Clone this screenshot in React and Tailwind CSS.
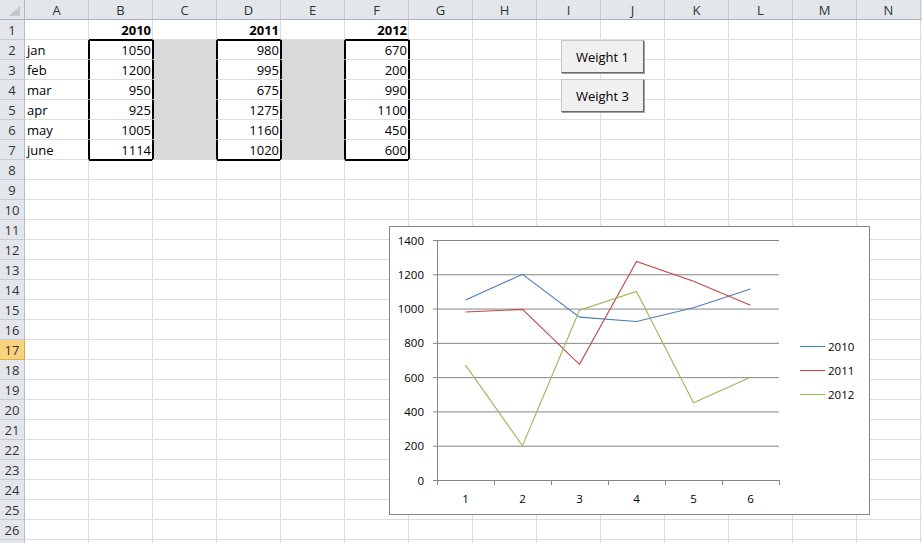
import React from "react";

const COLS = ["A","B","C","D","E","F","G","H","I","J","K","L","M","N","O"];
const MONTHS = ["jan","feb","mar","apr","may","june"];
const S2010 = [1050,1200,950,925,1005,1114];
const S2011 = [980,995,675,1275,1160,1020];
const S2012 = [670,200,990,1100,450,600];
const ROWS = Array.from({ length: 27 }, (_, i) => i + 1);

function cellContent(r, ci) {
  if (r === 1) {
    if (ci === 1) return { t: "2010", right: true, bold: true };
    if (ci === 3) return { t: "2011", right: true, bold: true };
    if (ci === 5) return { t: "2012", right: true, bold: true };
    return null;
  }
  if (r >= 2 && r <= 7) {
    const i = r - 2;
    if (ci === 0) return { t: MONTHS[i] };
    if (ci === 1) return { t: String(S2010[i]), right: true };
    if (ci === 3) return { t: String(S2011[i]), right: true };
    if (ci === 5) return { t: String(S2012[i]), right: true };
  }
  return null;
}

function Cell({ r, ci }) {
  const inBox = r >= 2 && r <= 7;
  const boxCol = ci === 1 || ci === 3 || ci === 5;
  const rightBlack = inBox && ci <= 5;
  const bottomBlack = (r === 1 || r === 7) && boxCol;
  const grayFill = inBox && (ci === 2 || ci === 4);
  const bottomGray = grayFill && r < 7;
  let shadow = "";
  if (inBox && boxCol && r === 2) shadow = "shadow-[inset_1px_1px_0_#000]";
  else if (inBox && ci >= 1 && ci <= 6) shadow = "shadow-[inset_1px_0_0_#000]";
  else if (r === 8 && boxCol) shadow = "shadow-[inset_0_1px_0_#000]";
  const c = cellContent(r, ci);
  const cls = [
    "h-[20px] pt-[3px] border-r border-b flex items-center overflow-hidden whitespace-nowrap text-[13px] text-black",
    rightBlack ? "border-r-black" : "border-r-[#dadcdd]",
    bottomBlack ? "border-b-black" : bottomGray ? "border-b-[#d9d9d9]" : "border-b-[#dadcdd]",
    grayFill ? "bg-[#d9d9d9]" : "bg-white",
    shadow,
    c && c.right ? "justify-end pr-[1px]" : "justify-start pl-[2px]",
    c && c.bold ? "font-bold" : "",
  ].join(" ");
  return <div className={cls}>{c ? c.t : ""}</div>;
}

function Chart() {
  const y = (v) => 253 - (v * 240) / 1400;
  const px = (i) => 47 + 57 * (i + 0.5);
  const pts = (arr) => arr.map((v, i) => `${px(i)},${y(v)}`).join(" ");
  const grid = [0, 200, 400, 600, 800, 1000, 1200, 1400];
  return (
    <div className="absolute left-[389px] top-[226px] w-[481px] h-[289px] border border-[#868686] bg-white">
      <svg width="479" height="287" viewBox="0 0 479 287" className="block">
        {grid.map((g) => (
          <g key={g}>
            <line x1="43" x2="389" y1={y(g) + 0.5} y2={y(g) + 0.5} stroke="#868686" strokeWidth="1" />
            <text x="34" y={y(g) + 4.5} textAnchor="end" fontSize="11.5" fill="#000" fontFamily="'Open Sans', sans-serif">{g}</text>
          </g>
        ))}
        <line x1="47.5" x2="47.5" y1="13" y2="254" stroke="#868686" strokeWidth="1" />
        {[0, 1, 2, 3, 4, 5, 6].map((k) => (
          <line key={k} x1={47.5 + 57 * k} x2={47.5 + 57 * k} y1="253" y2="258" stroke="#868686" strokeWidth="1" />
        ))}
        {[1, 2, 3, 4, 5, 6].map((n, i) => (
          <text key={n} x={px(i)} y="276" textAnchor="middle" fontSize="11.5" fill="#000" fontFamily="'Open Sans', sans-serif">{n}</text>
        ))}
        <polyline points={pts(S2010)} fill="none" stroke="#4a7ebb" strokeWidth="1.1" />
        <polyline points={pts(S2011)} fill="none" stroke="#be4b48" strokeWidth="1.1" />
        <polyline points={pts(S2012)} fill="none" stroke="#98b954" strokeWidth="1.1" />
        {[
          ["2010", "#4a7ebb", 119.5],
          ["2011", "#be4b48", 143.5],
          ["2012", "#98b954", 167.5],
        ].map(([t, col, yy]) => (
          <g key={t}>
            <line x1="410" x2="435" y1={yy} y2={yy} stroke={col} strokeWidth="1.1" />
            <text x="438" y={yy + 4} fontSize="11.5" fill="#000" fontFamily="'Open Sans', sans-serif">{t}</text>
          </g>
        ))}
      </svg>
    </div>
  );
}

function XButton({ top, label }) {
  return (
    <button
      className={
        "absolute left-[561px] w-[83px] h-[33px] pt-[2px] bg-[#f0f0f0] border border-t-[#c8c8c8] border-l-[#c8c8c8] border-r-[#696969] border-b-[#696969] shadow-[1px_1px_0_#a0a0a0] text-[13px] text-black flex items-center justify-center " +
        top
      }
    >
      {label}
    </button>
  );
}

export default function App() {
  return (
    <div className="relative w-[922px] h-[543px] overflow-hidden bg-white font-['Open_Sans',sans-serif]">
      <div className="grid grid-cols-[25px_repeat(15,64px)] auto-rows-[20px]">
        <div className="h-[20px] bg-[#e3e6ea] border-r border-b border-r-[#b6bcc4] border-b-[#a9b0b8] flex items-start justify-start">
          <svg width="24" height="19" viewBox="0 0 24 19">
            <polygon points="20,6 20,16 9,16" fill="#c2c7cd" />
          </svg>
        </div>
        {COLS.map((c) => (
          <div
            key={c}
            className="h-[20px] pt-[3px] bg-[#e3e6ea] border-r border-b border-r-[#c7ccd2] border-b-[#a9b0b8] flex items-center justify-center text-[13px] text-[#333]"
          >
            {c === "O" ? "" : c}
          </div>
        ))}
        {ROWS.map((r) => (
          <React.Fragment key={r}>
            <div
              className={
                r === 17
                  ? "h-[20px] pt-[3px] bg-[#f8d47f] border-r border-b border-r-[#d8a848] border-b-[#e2ac46] flex items-center justify-center text-[13px] text-[#333]"
                  : "h-[20px] pt-[3px] bg-[#e3e6ea] border-r border-b border-r-[#b6bcc4] border-b-[#c7ccd2] flex items-center justify-center text-[13px] text-[#333]"
              }
            >
              {r === 27 ? "" : r}
            </div>
            {COLS.map((c, ci) => (
              <Cell key={c} r={r} ci={ci} />
            ))}
          </React.Fragment>
        ))}
      </div>
      <XButton top="top-[40px]" label="Weight 1" />
      <XButton top="top-[79px]" label="Weight 3" />
      <Chart />
    </div>
  );
}
